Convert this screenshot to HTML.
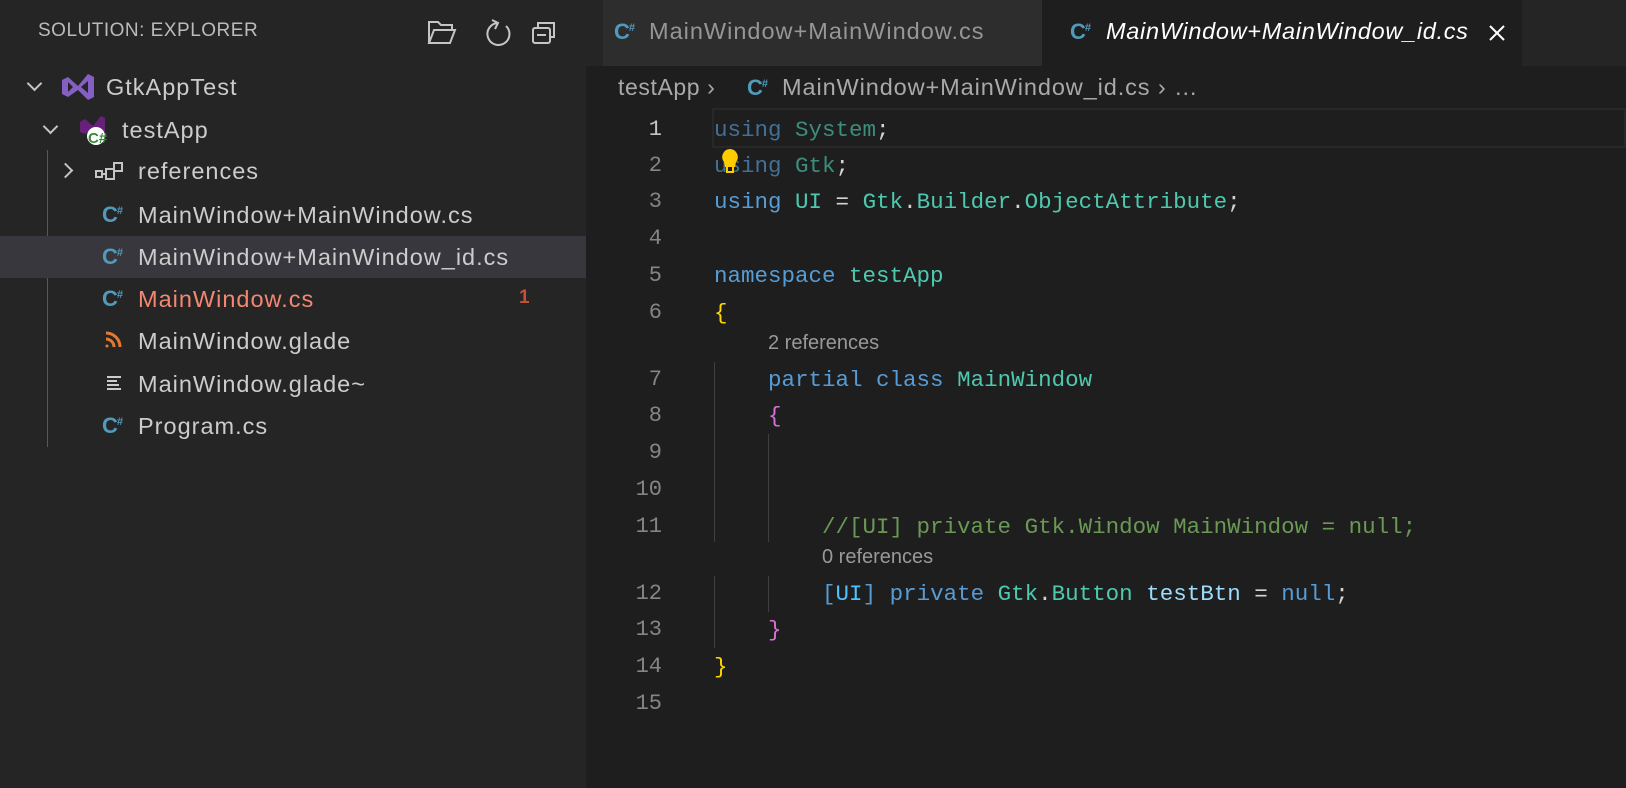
<!DOCTYPE html>
<html><head><meta charset="utf-8"><style>
*{margin:0;padding:0;box-sizing:border-box}
body{width:1626px;height:788px;background:#1e1e1e;position:relative;overflow:hidden;font-family:"Liberation Sans",sans-serif;color:#cccccc}
.a{position:absolute;white-space:nowrap}
#side{left:0;top:0;width:586px;height:788px;background:#252526}
.row{position:absolute;left:0;width:586px;height:42px;line-height:42px;font-size:23.5px;letter-spacing:1px;color:#cccccc}
.cs{position:absolute;font-weight:bold;color:#519aba;font-size:22px;letter-spacing:-1px}
.cs sup{font-size:11px;vertical-align:8px}
.code{position:absolute;left:714px;font-family:"Liberation Mono",monospace;font-size:22.5px;height:36px;line-height:36px;white-space:pre;color:#d4d4d4}
.ln{position:absolute;left:600px;width:62px;text-align:right;font-family:"Liberation Mono",monospace;font-size:22px;height:36px;line-height:36px;color:#858585}
.k{color:#569cd6}.t{color:#4ec9b0}.c{color:#6a9955}.v{color:#9cdcfe}.y{color:#ffd700}.p{color:#da70d6}
.lens{position:absolute;font-size:20px;color:#999999;height:30px;line-height:30px}
.guide{position:absolute;width:1px;background:#404040}
.chev{position:absolute;width:11px;height:11px;border-right:2px solid #c5c5c5;border-bottom:2px solid #c5c5c5}
</style></head><body>
<div id="side" class="a"></div>
<div class="a" style="left:38px;top:20px;font-size:19px;color:#bbbbbb;letter-spacing:0.5px">SOLUTION: EXPLORER</div>
<svg class="a" style="left:426px;top:16px" width="140" height="32" viewBox="0 0 140 32" fill="none" stroke="#c5c5c5" stroke-width="2">
<path d="M3 27V6h9l3 3h11v5M3 27l5-13h21l-5 13z"/>
<path d="M72 7a11 11 0 1 0 8 3M66 4l6 3-3 6" />
<rect x="107" y="12" width="17" height="15" rx="2"/><path d="M112 12V7h16v14h-4M111 19h9"/>
</svg>
<div class="chev" style="left:29px;top:78px;transform:rotate(45deg)"></div>
<svg class="a" style="left:62px;top:72px" width="32" height="30" viewBox="0 0 32 30"><path d="M0 8l6-3 10 9L26 2l6 3v20l-6 3-10-10-10 7-6-3z" fill="#865fc5"/><path d="M6 10v10l5-5z M26 9v12l-7-6z" fill="#252526"/></svg>
<div class="row" style="top:66px;padding-left:106px">GtkAppTest</div>
<div class="chev" style="left:45px;top:121px;transform:rotate(45deg)"></div>
<svg class="a" style="left:80px;top:116px" width="32" height="32" viewBox="0 0 32 32"><path d="M0 6l5-3 8 7 8-10 4 2v14l-4 2-8-6-8 6-5-2z" fill="#68217a"/><circle cx="16" cy="20" r="9" fill="#ffffff"/><text x="8" y="27" font-size="15" font-weight="bold" fill="#388a34" font-family="Liberation Sans">C#</text></svg>
<div class="row" style="top:109px;padding-left:122px">testApp</div>
<div class="guide" style="left:47px;top:150px;height:297px;background:#585858"></div>
<div class="chev" style="left:60px;top:165px;transform:rotate(-45deg)"></div>
<svg class="a" style="left:94px;top:161px" width="30" height="22" viewBox="0 0 30 22" fill="none" stroke="#c5c5c5" stroke-width="2"><rect x="2" y="10" width="6" height="6"/><rect x="12" y="8" width="8" height="10"/><rect x="20" y="2" width="8" height="8"/><path d="M8 13h4"/></svg>
<div class="row" style="top:150px;padding-left:138px">references</div>
<div class="row" style="top:194px;padding-left:138px">MainWindow+MainWindow.cs</div><div class="cs" style="left:102px;top:202px">C<sup>#</sup></div>
<div class="row" style="top:236px;padding-left:138px;background:#37373d">MainWindow+MainWindow_id.cs</div><div class="cs" style="left:102px;top:244px">C<sup>#</sup></div>
<div class="row" style="top:278px;padding-left:138px;color:#f48771">MainWindow.cs</div><div class="cs" style="left:102px;top:286px">C<sup>#</sup></div>
<div class="a" style="left:519px;top:287px;font-size:19px;font-weight:bold;color:#c74e39">1</div>
<svg class="a" style="left:104px;top:331px" width="18" height="18" viewBox="0 0 18 18" fill="none" stroke="#e37933" stroke-width="3"><circle cx="3" cy="15" r="1.5" fill="#e37933" stroke="none"/><path d="M2 8a8 8 0 0 1 8 8M2 2a14 14 0 0 1 14 14"/></svg>
<div class="row" style="top:320px;padding-left:138px">MainWindow.glade</div>
<svg class="a" style="left:106px;top:374px" width="18" height="18" viewBox="0 0 18 18" stroke="#cccccc" stroke-width="2"><path d="M1 3h14M1 7h10M1 11h12M1 15h14"/></svg>
<div class="row" style="top:363px;padding-left:138px">MainWindow.glade~</div>
<div class="row" style="top:405px;padding-left:138px">Program.cs</div><div class="cs" style="left:102px;top:413px">C<sup>#</sup></div>
<div class="a" style="left:586px;top:0;width:1040px;height:66px;background:#252526"></div>
<div class="a" style="left:603px;top:0;width:439px;height:66px;background:#2d2d2d"></div>
<div class="a" style="left:1042px;top:0;width:480px;height:66px;background:#1e1e1e"></div>
<div class="cs" style="left:614px;top:19px">C<sup>#</sup></div>
<div class="a" style="left:649px;top:18px;font-size:23.5px;letter-spacing:1px;color:#969696">MainWindow+MainWindow.cs</div>
<div class="cs" style="left:1070px;top:19px">C<sup>#</sup></div>
<div class="a" style="left:1106px;top:18px;font-size:23.5px;letter-spacing:0.7px;color:#ffffff;font-style:italic">MainWindow+MainWindow_id.cs</div>
<svg class="a" style="left:1488px;top:24px" width="18" height="18" viewBox="0 0 18 18" stroke="#ffffff" stroke-width="2"><path d="M2 2l14 14M16 2L2 16"/></svg>
<div class="a" style="left:618px;top:74px;font-size:23px;letter-spacing:0.6px;color:#a9a9a9">testApp &#x203A;</div>
<div class="cs" style="left:747px;top:75px">C<sup>#</sup></div>
<div class="a" style="left:782px;top:74px;font-size:23.5px;letter-spacing:0.9px;color:#a9a9a9">MainWindow+MainWindow_id.cs &#x203A; …</div>
<div class="a" style="left:712px;top:108px;width:914px;height:40px;border:2px solid #282828"></div>
<div class="guide" style="left:714px;top:362px;height:180px"></div>
<div class="guide" style="left:714px;top:576px;height:72px"></div>
<div class="guide" style="left:768px;top:434px;height:108px"></div>
<div class="guide" style="left:768px;top:576px;height:36px"></div>
<div class="ln" style="top:112px;color:#c6c6c6">1</div>
<div class="ln" style="top:148px">2</div>
<div class="ln" style="top:184px">3</div>
<div class="ln" style="top:221px">4</div>
<div class="ln" style="top:258px">5</div>
<div class="ln" style="top:295px">6</div>
<div class="ln" style="top:362px">7</div>
<div class="ln" style="top:398px">8</div>
<div class="ln" style="top:435px">9</div>
<div class="ln" style="top:472px">10</div>
<div class="ln" style="top:509px">11</div>
<div class="ln" style="top:576px">12</div>
<div class="ln" style="top:612px">13</div>
<div class="ln" style="top:649px">14</div>
<div class="ln" style="top:686px">15</div>
<div class="code" style="top:112px"><span class="k" style="opacity:.65">using</span> <span class="t" style="opacity:.65">System</span>;</div>
<div class="code" style="top:148px"><span class="k" style="opacity:.65">using</span> <span class="t" style="opacity:.65">Gtk</span>;</div>
<svg class="a" style="left:720px;top:148px" width="20" height="28" viewBox="0 0 20 28"><path d="M10 1a8 8 0 0 0-6 13l1 5h10l1-5A8 8 0 0 0 10 1z" fill="#ffcc00"/><rect x="6" y="19" width="8" height="6" fill="#ffcc00"/><rect x="8" y="19" width="4" height="4" fill="#1e1e1e"/></svg>
<div class="code" style="top:184px"><span class="k">using</span> <span class="t">UI</span> = <span class="t">Gtk</span>.<span class="t">Builder</span>.<span class="t">ObjectAttribute</span>;</div>
<div class="code" style="top:258px"><span class="k">namespace</span> <span class="t">testApp</span></div>
<div class="code" style="top:295px"><span class="y">{</span></div>
<div class="lens" style="left:768px;top:328px">2 references</div>
<div class="code" style="top:362px">    <span class="k">partial</span> <span class="k">class</span> <span class="t">MainWindow</span></div>
<div class="code" style="top:398px">    <span class="p">{</span></div>
<div class="code" style="top:509px">        <span class="c">//[UI] private Gtk.Window MainWindow = null;</span></div>
<div class="lens" style="left:822px;top:542px">0 references</div>
<div class="code" style="top:576px">        <span class="k">[</span><span style="color:#4fc1ff">UI</span><span class="k">]</span> <span class="k">private</span> <span class="t">Gtk</span>.<span class="t">Button</span> <span class="v">testBtn</span> = <span class="k">null</span>;</div>
<div class="code" style="top:612px">    <span class="p">}</span></div>
<div class="code" style="top:649px"><span class="y">}</span></div>
</body></html>
